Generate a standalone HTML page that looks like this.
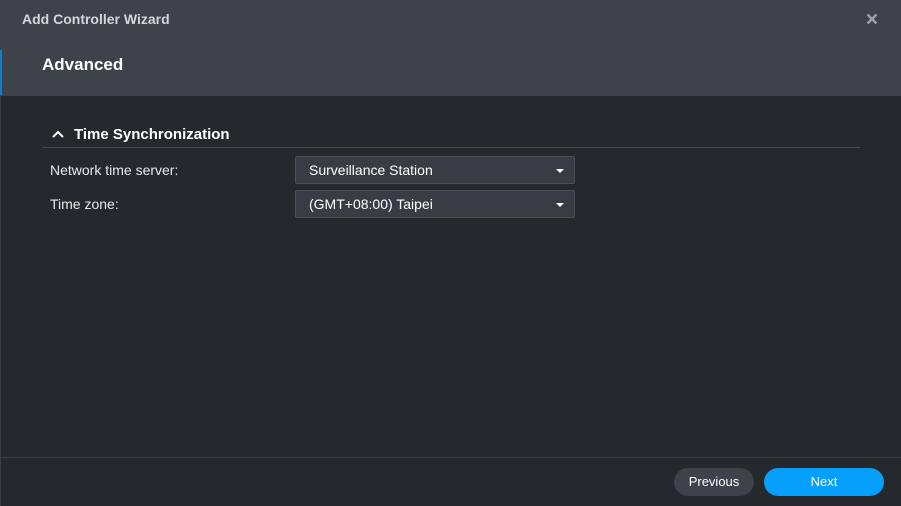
<!DOCTYPE html><html><head><style>
body{margin:0;width:901px;height:506px;background:#25282d;font-family:"Liberation Sans",sans-serif;position:relative;overflow:hidden}
.hd{position:absolute;left:0;top:0;width:901px;height:96px;background:#3d424b}
.t1{position:absolute;left:22px;top:11px;font-size:14px;font-weight:bold;color:#d4d6d9}
.t2{position:absolute;left:42px;top:55px;font-size:17px;font-weight:bold;color:#fff}
.bar{position:absolute;left:0;top:50px;width:2px;height:45px;background:#0a7fd6}
.x{position:absolute;left:866px;top:13px;width:12px;height:12px}
.sec{position:absolute;left:42px;top:126px;width:818px;height:21px;border-bottom:1px solid #454950;color:#fff;font-weight:bold;font-size:15px}
.lbl{position:absolute;left:50px;font-size:14px;color:#e8e9ea}
.sel{position:absolute;left:295px;background:#383d45;border:1px solid #4a4f57;border-radius:2px;color:#fff;font-size:14px;box-sizing:border-box;width:280px;height:28px;line-height:26px;padding-left:13px}
.sel:after{content:"";position:absolute;right:10px;top:12px;border-left:4px solid transparent;border-right:4px solid transparent;border-top:4px solid #fff}
.ft{position:absolute;left:0;top:457px;width:901px;height:1px;background:#393d44}
.btn{position:absolute;top:468px;height:28px;border-radius:14px;color:#fff;font-size:13px;text-align:center;line-height:28px}
.edge{position:absolute;left:0;top:96px;width:1px;height:410px;background:#3a3e45}
</style></head><body>
<div class="hd"></div><div class="bar"></div>
<div class="t1">Add Controller Wizard</div>
<div class="t2">Advanced</div>
<svg class="x" viewBox="0 0 12 12"><path d="M1.5 1.5L10.5 10.5M10.5 1.5L1.5 10.5" stroke="#9ea2a8" stroke-width="2.4"/></svg>
<div class="sec"><svg style="position:absolute;left:10px;top:4px" width="12" height="8" viewBox="0 0 12 8"><path d="M1 7L6 2L11 7" stroke="#fff" stroke-width="2" fill="none"/></svg><span style="position:absolute;left:32px;top:0">Time Synchronization</span></div>
<div class="lbl" style="top:162px">Network time server:</div>
<div class="sel" style="top:156px">Surveillance Station</div>
<div class="lbl" style="top:196px">Time zone:</div>
<div class="sel" style="top:190px">(GMT+08:00) Taipei</div>
<div class="ft"></div><div class="edge"></div>
<div class="btn" style="left:674px;width:80px;background:#3d424b">Previous</div>
<div class="btn" style="left:764px;width:120px;background:#069ffb">Next</div>
</body></html>
